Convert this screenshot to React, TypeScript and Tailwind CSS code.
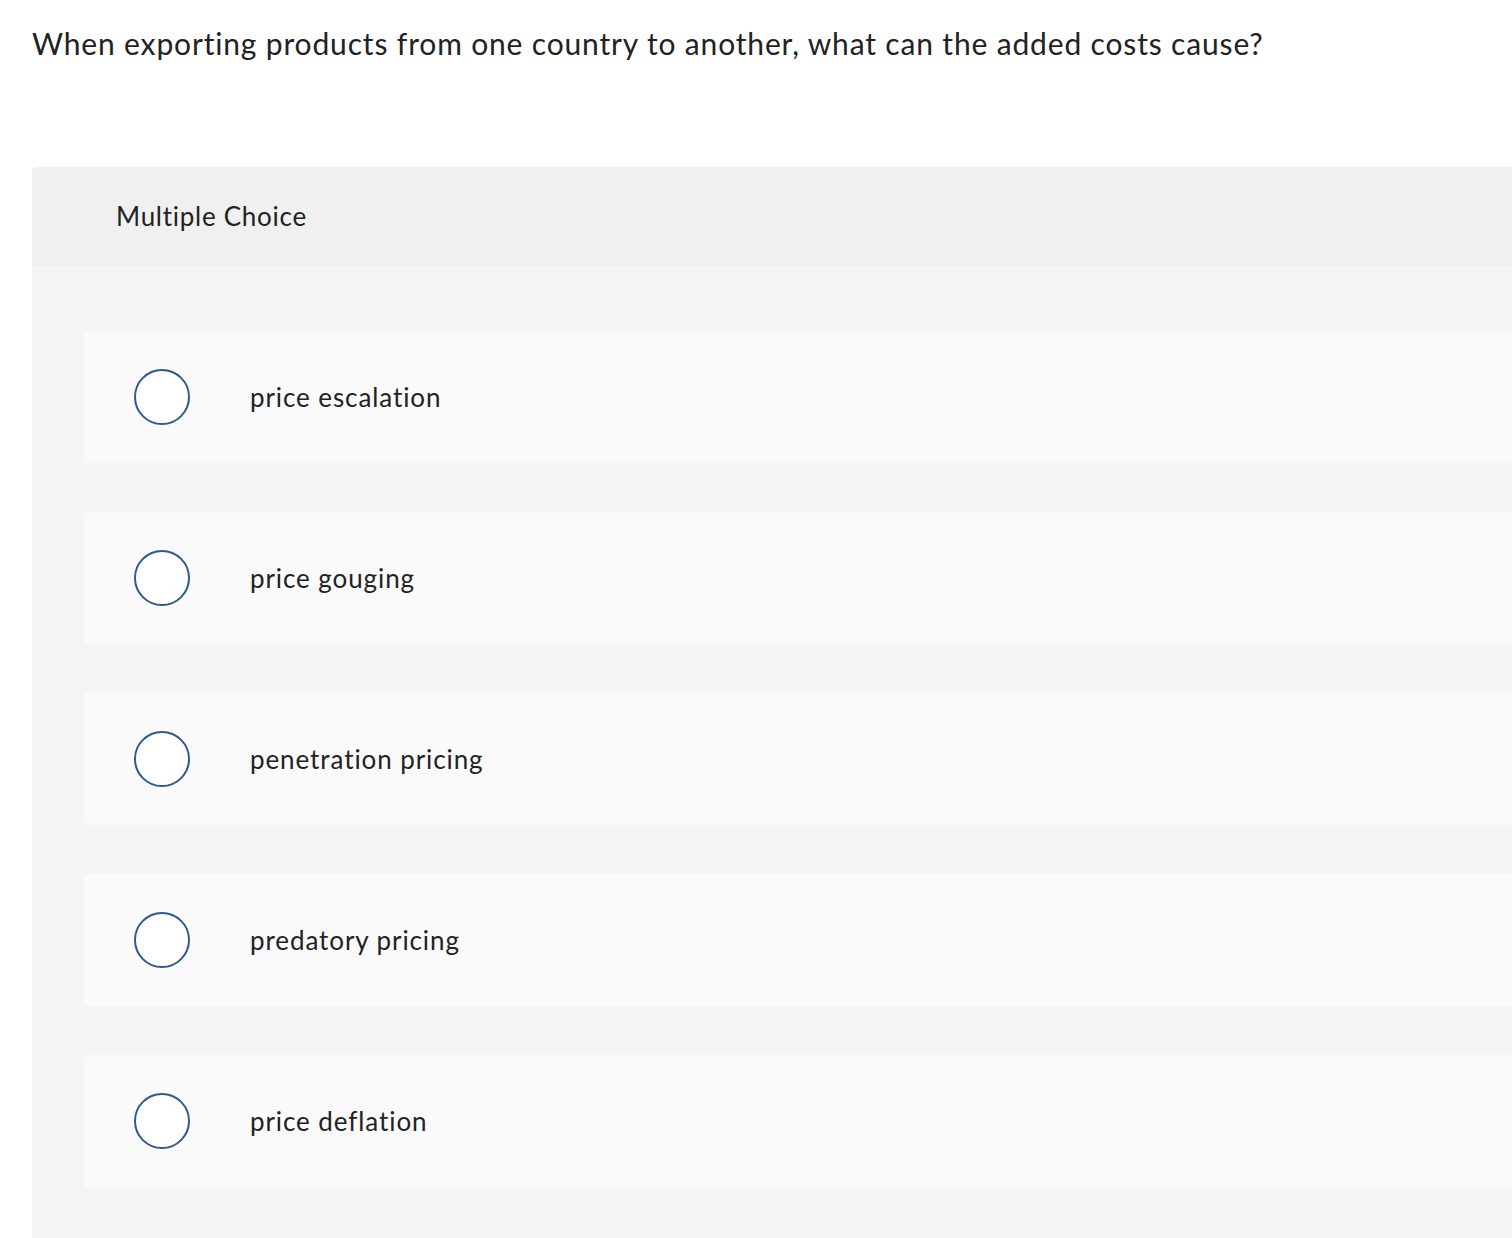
import React from 'react';

const options = [
  'price escalation',
  'price gouging',
  'penetration pricing',
  'predatory pricing',
  'price deflation',
];

const App: React.FC = () => {
  return (
    <div
      className="min-h-[1238px] bg-white pl-8 pt-[23px] text-[#222] [font-variant-ligatures:none]"
      style={{ fontFamily: 'Lato, "Open Sans", sans-serif' }}
    >
      <p className="text-[30px] leading-[40px] tracking-[0.028em] whitespace-nowrap">
        When exporting products from one country to another, what can the added costs cause?
      </p>

      <div className="mt-[104px] rounded-tl-[4px] overflow-hidden">
        <div className="h-[99px] bg-[#f0f0f0] flex items-center pl-[84px]">
          <span className="text-[26px] tracking-[0.028em]">Multiple Choice</span>
        </div>
        <div className="bg-[#f5f5f5] pl-[52px] pt-[65px] pb-[60px] flex flex-col gap-[49px]">
          {options.map((opt) => (
            <label
              key={opt}
              className="h-[132px] bg-[#fafafa] rounded-l-[4px] flex items-center pl-[50px] cursor-pointer"
            >
              <span className="w-[56px] h-[56px] rounded-full border-2 border-[#2e5a8c] bg-white shrink-0" />
              <span className="ml-[60px] text-[26px] tracking-[0.035em]">{opt}</span>
            </label>
          ))}
        </div>
      </div>
    </div>
  );
};

export default App;
